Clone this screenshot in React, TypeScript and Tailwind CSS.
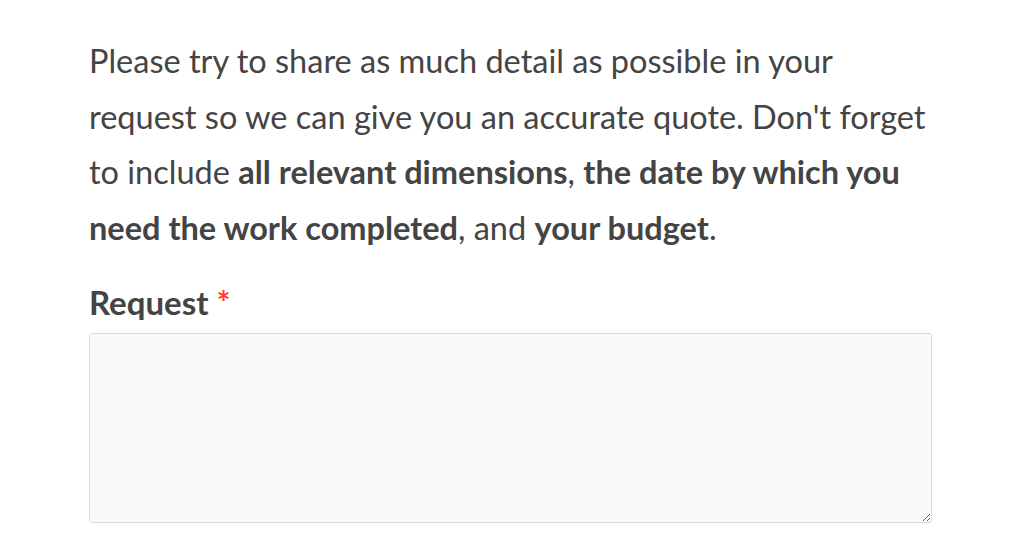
import React from "react";

export default function App() {
  return (
    <div className="min-h-[552px] bg-white font-['Lato',sans-serif] text-[#444444]">
      <div className="ml-[89px] w-[843px] pt-[33px]">
        <p className="w-[880px] text-[32.5px] leading-[55.5px]">
          Please try to share as much detail as possible in your
          <br />
          request so we can give you an accurate quote. Don't forget
          <br />
          to include <strong className="font-bold">all relevant dimensions</strong>,{" "}
          <strong className="font-bold">the date by which you</strong>
          <br />
          <strong className="font-bold">need the work completed</strong>, and{" "}
          <strong className="font-bold">your budget</strong>.
        </p>
        <label className="mt-[27px] block text-[33px] font-bold leading-[40px]">
          Request<span className="ml-[8px] text-[#ff3b30]">*</span>
        </label>
        <textarea className="mt-[11px] block h-[190px] w-full rounded-[3px] border border-[#dddddd] bg-[#fafafa]" />
      </div>
    </div>
  );
}
